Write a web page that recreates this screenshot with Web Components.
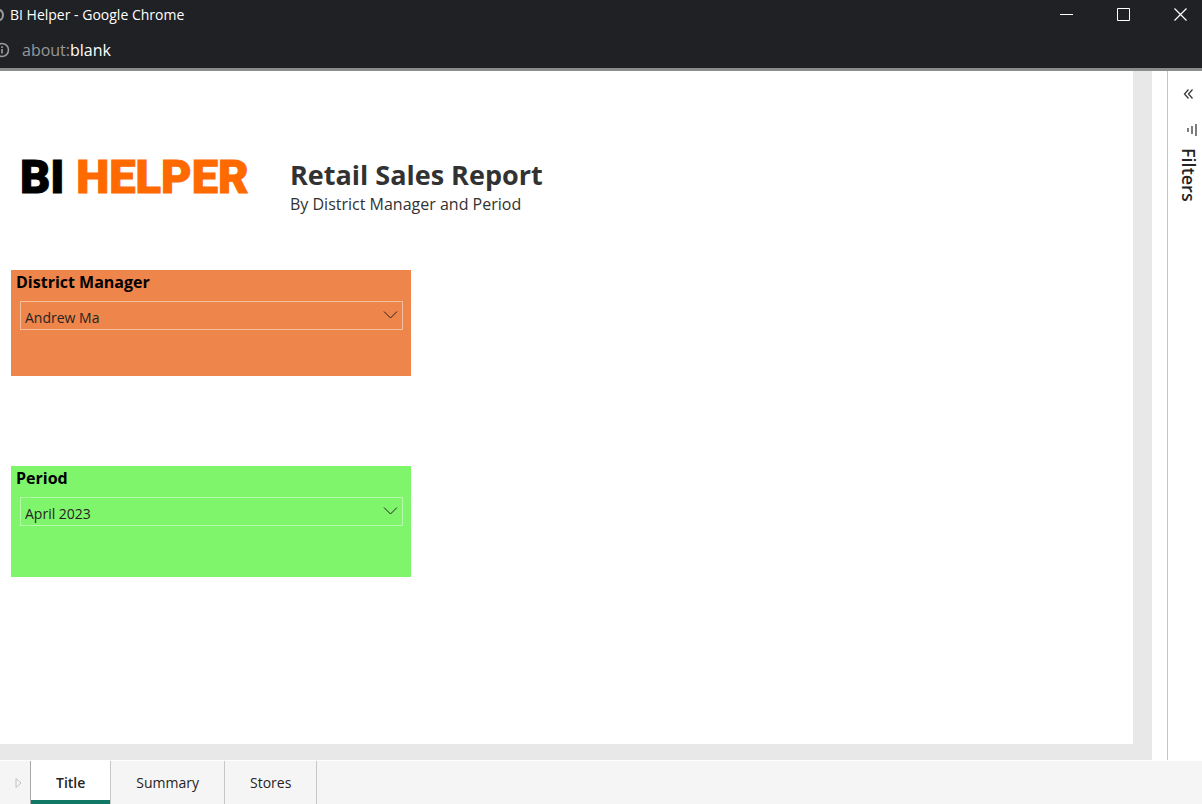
<!DOCTYPE html>
<html lang="en">
<head>
<meta charset="utf-8">
<title>BI Helper</title>
<style>
html, body { height: 100%; margin: 0; }
body { font-family: "Open Sans", "Noto Sans", sans-serif; background: #fff; color: #252423; }
</style>
</head>
<body>
<report-window></report-window>

<template id="t-window">
<style>
:host { display: flex; flex-direction: column; min-height: 100vh; }
.main { flex: 1; display: flex; }
.stage { flex: 1; background: #e8e8e8; padding: 0 19px 16px 0; display: flex; }
report-canvas { flex: 1; }
filter-pane { margin-left: 15px; }
</style>
<chrome-bar></chrome-bar>
<div class="main">
  <main class="stage"><report-canvas></report-canvas></main>
  <filter-pane></filter-pane>
</div>
<page-tabs></page-tabs>
</template>

<template id="t-chrome">
<style>
:host { display: block; background: #202124; color: #fff; border-bottom: 3px solid #8c8c8d; overflow: hidden; }
.title { display: flex; align-items: center; height: 30px; padding-right: 14px; }
.dot { width: 6px; height: 12px; margin-right: 4px; flex: none; }
.title span { flex: 1; font-size: 14px; line-height: 20px; }
button { all: unset; width: 57px; height: 30px; display: grid; place-items: center end; }
.address { display: flex; align-items: center; height: 38px; gap: 12px; font-size: 16px; line-height: 24px; }
.address svg { width: 10px; height: 16px; margin-top: 2px; }
.address div { padding-top: 2px; }
.scheme { color: #96989b; }
</style>
<div class="title">
  <svg class="dot" viewBox="0 0 6 12"><path d="M-1 1A4 5 0 0 1-1 11" fill="none" stroke="#9a9b9d" stroke-width="2"/></svg>
  <span>BI Helper - Google Chrome</span>
  <button aria-label="Minimize"><svg width="14" height="14"><path d="M0 6.5h13" stroke="#fff"/></svg></button>
  <button aria-label="Maximize"><svg width="14" height="14"><path d="M.5.5h12v12H.5z" fill="none" stroke="#fff"/></svg></button>
  <button aria-label="Close"><svg width="14" height="14"><path d="M.5.5l12 12M12.5.5L.5 12.5" stroke="#fff" stroke-width="1.2"/></svg></button>
</div>
<div class="address">
  <svg viewBox="0 0 10 16"><circle cx="2" cy="8" r="6.5" fill="none" stroke="#96989b" stroke-width="1.6"/><path d="M2 7v4.5M2 4.3v1.7" stroke="#96989b" stroke-width="1.7"/></svg>
  <div><span class="scheme">about:</span><span>blank</span></div>
</div>
</template>

<template id="t-canvas">
<style>
:host { display: block; background: #fff; box-sizing: border-box; padding: 84px 11px 24px; }
header { display: flex; gap: 43px; padding-left: 9px; height: 115px; }
.logo { width: 227px; font: 900 47px/44px Roboto, sans-serif; color: #000; white-space: nowrap; -webkit-text-stroke: 1px; }
.logo b { font-weight: 900; color: #ff6a00; }
h1 { margin: 0; font-size: 27px; line-height: 40px; font-weight: 700; color: #323232; }
p { margin: 0; font-size: 16px; line-height: 18px; color: #323232; }
.cards { display: flex; flex-direction: column; gap: 90px; max-width: 400px; }
.manager { --card: #ee854a; --edge: #f6bd9c; --tall: 106px; }
.period { --card: #7ef56b; --edge: #b5f9aa; --tall: 111px; }
</style>
<header>
  <div class="logo">BI <b>HELPER</b></div>
  <div><h1>Retail Sales Report</h1><p>By District Manager and Period</p></div>
</header>
<div class="cards">
  <slicer-card class="manager" label="District Manager" value="Andrew Ma"></slicer-card>
  <slicer-card class="period" label="Period" value="April 2023"></slicer-card>
</div>
</template>

<template id="t-slicer">
<style>
:host { display: block; box-sizing: border-box; min-height: var(--tall); background: var(--card); padding: 0 8px 0 5px; }
label { display: block; font-size: 16px; line-height: 24px; font-weight: 700; color: #000; margin-bottom: 7px; }
.box { position: relative; margin-left: 4px; }
select { appearance: none; display: block; width: 100%; height: 29px; box-sizing: border-box; margin: 0; padding: 3px 28px 0 4px; border: 1px solid var(--edge); border-radius: 0; background: transparent; font: inherit; font-size: 14px; color: #252423; }
svg { position: absolute; right: 5px; top: 9px; pointer-events: none; }
</style>
<label for="pick"></label>
<div class="box">
  <select id="pick"><option></option></select>
  <svg width="15" height="10"><path d="M1 1.5l6.5 6.5L14 1.5" fill="none" stroke="#252423"/></svg>
</div>
</template>

<template id="t-filter">
<style>
:host { display: flex; flex-direction: column; align-items: flex-end; width: 34px; box-sizing: content-box; border-left: 1px solid #c8c6c4; background: #fff; }
button { all: unset; display: block; margin: 16px 9px 0 0; height: 14px; }
button svg, .glyph { display: block; }
.glyph { margin: 23px 5px 0 0; }
h2 { margin: 12px 1px 0 0; writing-mode: vertical-rl; font-size: 18px; line-height: 24px; font-weight: 600; color: #252423; }
</style>
<button aria-label="Expand filters"><svg width="10" height="14"><path d="M5.5 2.5L1.5 7l4 4.5M9.5 2.5L5.5 7l4 4.5" fill="none" stroke="#3b3a39" stroke-width="1.3"/></svg></button>
<svg class="glyph" width="10" height="12"><path d="M9 0v12M5 2v8M1 4v4" stroke="#605e5c" stroke-width="1.6"/></svg>
<h2>Filters</h2>
</template>

<template id="t-tabs">
<style>
:host { display: block; background: #f5f5f5; border-top: 1px solid #fff; }
nav { display: flex; height: 43px; }
button { all: unset; width: 30px; display: grid; place-items: center end; }
button svg { margin-right: 8px; }
a { box-sizing: border-box; padding: 0 25px; border-right: 1px solid #c8c6c4; font-size: 14px; line-height: 43px; color: #252423; text-decoration: none; }
a[aria-current] { background: #fff; border-left: 1px solid #a9a8a7; box-shadow: inset 0 -4px #117865; font-weight: 600; }
</style>
<nav aria-label="Pages">
  <button aria-label="Next pages"><svg width="7" height="12"><path d="M1 1.5L6 6L1 10.5z" fill="none" stroke="#c2c2c2"/></svg></button>
  <a href="#title" aria-current="page">Title</a>
  <a href="#summary">Summary</a>
  <a href="#stores">Stores</a>
</nav>
</template>

<script>
class TemplateElement extends HTMLElement {
  constructor() {
    super();
    const source = document.getElementById(this.constructor.template);
    this.attachShadow({ mode: "open" }).append(source.content.cloneNode(true));
  }
}
class ChromeBar extends TemplateElement { static template = "t-chrome"; }
class ReportCanvas extends TemplateElement { static template = "t-canvas"; }
class FilterPane extends TemplateElement { static template = "t-filter"; }
class PageTabs extends TemplateElement { static template = "t-tabs"; }
class ReportWindow extends TemplateElement { static template = "t-window"; }
class SlicerCard extends TemplateElement {
  static template = "t-slicer";
  connectedCallback() {
    this.shadowRoot.querySelector("label").textContent = this.getAttribute("label");
    this.shadowRoot.querySelector("option").textContent = this.getAttribute("value");
  }
}
customElements.define("slicer-card", SlicerCard);
customElements.define("chrome-bar", ChromeBar);
customElements.define("report-canvas", ReportCanvas);
customElements.define("filter-pane", FilterPane);
customElements.define("page-tabs", PageTabs);
customElements.define("report-window", ReportWindow);
</script>
</body>
</html>
